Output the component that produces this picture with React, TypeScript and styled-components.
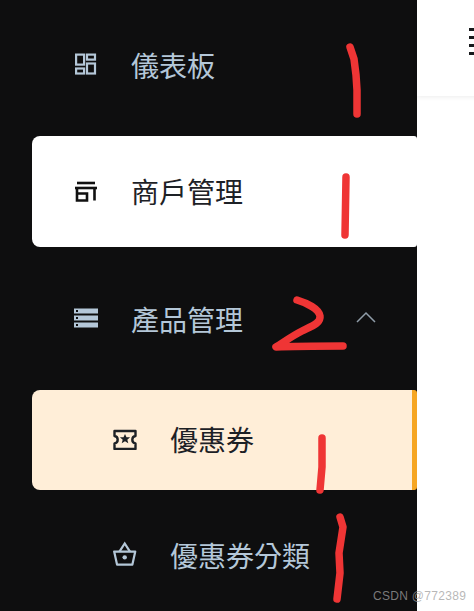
import React, { FC, ReactNode } from 'react';
import styled, { createGlobalStyle } from 'styled-components';

const GlobalStyle = createGlobalStyle`
  html, body {
    margin: 0;
    padding: 0;
    background: #fff;
  }
`;

const Page = styled.div`
  position: relative;
  display: flex;
  width: 474px;
  height: 611px;
  overflow: hidden;
  font-family: 'Noto Sans CJK TC', 'Noto Sans', sans-serif;
`;

const Sidebar = styled.nav`
  display: flex;
  flex-direction: column;
  flex: 0 0 417px;
  box-sizing: border-box;
  padding: 10px 0 0 32px;
  background: #0e0e0f;
`;

const Item = styled.div<{ $height: number; $gap: number; $sub?: boolean; $state?: 'white' | 'cream' }>`
  display: flex;
  align-items: center;
  flex: 0 0 ${(p) => p.$height}px;
  box-sizing: border-box;
  margin-bottom: ${(p) => p.$gap}px;
  padding-left: ${(p) => (p.$sub ? 81 : 42)}px;
  border-radius: 8px 3px 3px 8px;
  color: ${(p) => (p.$state ? '#1d2126' : '#b4c7d8')};
  background: ${(p) => (p.$state === 'white' ? '#fff' : p.$state === 'cream' ? '#ffeed8' : 'transparent')};
  border-right: ${(p) => (p.$state === 'cream' ? '5px solid #f6a623' : 'none')};
`;

const IconBox = styled.span`
  display: flex;
  flex: 0 0 24px;
  min-width: 0;
  margin: -4px 33px 0 0;
`;

const Label = styled.span`
  flex: 1;
  margin-top: -2px;
  font-size: 28px;
  line-height: 40px;
  white-space: nowrap;
`;

const Chevron = styled.svg`
  flex: none;
  margin: -6px 41px 0 0;
  color: #8f9ca8;
`;

const Main = styled.main`
  flex: 1;
  background: #fff;
`;

const Header = styled.header`
  display: flex;
  align-items: center;
  height: 96px;
  padding-left: 52px;
  box-sizing: border-box;
  background: #fff;
  box-shadow: 0 1px 5px rgba(0, 0, 0, 0.08);
`;

const MenuBars = styled.div`
  display: flex;
  flex-direction: column;
  flex: none;
  gap: 5px;
  width: 22px;
  margin-top: -14px;
`;

const Bar = styled.span`
  display: block;
  height: 3px;
  background: #17191c;
`;

const Scribbles = styled.svg`
  position: absolute;
  inset: 0;
  pointer-events: none;
`;

const Watermark = styled.span`
  position: absolute;
  left: 373px;
  top: 589px;
  font-family: 'Liberation Sans', Arial, sans-serif;
  font-size: 12px;
  line-height: 14px;
  letter-spacing: 0.3px;
  color: rgba(160, 160, 160, 0.75);
`;

const DashboardIcon = () => (
  <svg width="24" height="24" viewBox="0 0 24 24" fill="none" stroke="currentColor" strokeWidth="2.2">
    <rect x="2.100" y="2.600" width="8" height="10" />
    <rect x="13" y="2.600" width="8" height="5" />
    <rect x="13" y="11.500" width="8" height="10" />
    <rect x="2.100" y="16.500" width="8" height="5" />
  </svg>
);

const StoreIcon = () => (
  <svg width="24" height="24" viewBox="0 0 24 24" fill="none" stroke="#111" strokeWidth="2.6">
    <path d="M3 5h18" />
    <path d="M1 10h22" />
    <path d="M3 10v12.500h10v-7H3" />
    <path d="M20.500 10v12.500" />
  </svg>
);

const ServerIcon = () => (
  <svg width="24" height="24" viewBox="0 0 24 24">
    <g fill="currentColor">
      <rect x="0" y="2.500" width="24" height="5" />
      <rect x="0" y="9.500" width="24" height="5" />
      <rect x="0" y="16.500" width="24" height="5" />
    </g>
    <g fill="#0e0e0f">
      <rect x="2" y="4" width="2" height="2" />
      <rect x="2" y="11" width="2" height="2" />
      <rect x="2" y="18" width="2" height="2" />
    </g>
  </svg>
);

const TicketIcon = () => (
  <svg width="24" height="24" viewBox="0 0 24 24" fill="none" stroke="currentColor" strokeWidth="2.4">
    <path d="M1.500 5h21v5a3.800 3.800 0 0 0 0 7.500V23h-21v-5.500a3.800 3.800 0 0 0 0-7.500z" strokeLinejoin="round" />
    <path
      d="M12 8l1.500 3.300h3.600l-2.800 2.400 1 3.600-3.300-2-3.300 2 1-3.600-2.800-2.400h3.600z"
      fill="currentColor"
      stroke="none"
    />
  </svg>
);

const BasketIcon = () => (
  <svg width="25" height="26" viewBox="0 0 25 26" fill="none" stroke="currentColor" strokeWidth="2.3">
    <path d="M1.200 10.500h22l-3 13.500H4.200z" strokeLinejoin="round" />
    <path d="M6.700 10.500L12.200 2l5.500 8.500" />
    <circle cx="12.200" cy="16.500" r="2.300" fill="currentColor" stroke="none" />
  </svg>
);

type Row = {
  label: string;
  icon: ReactNode;
  height: number;
  gap: number;
  sub?: boolean;
  state?: 'white' | 'cream';
  open?: boolean;
};

const rows: Row[] = [
  { label: '儀表板', icon: <DashboardIcon />, height: 111, gap: 15 },
  { label: '商戶管理', icon: <StoreIcon />, height: 111, gap: 17, state: 'white' },
  { label: '產品管理', icon: <ServerIcon />, height: 111, gap: 15, open: true },
  { label: '優惠券', icon: <TicketIcon />, height: 100, gap: 16, sub: true, state: 'cream' },
  { label: '優惠券分類', icon: <BasketIcon />, height: 100, gap: 0, sub: true },
];

const App: FC = () => (
  <>
    <GlobalStyle />
    <Page>
      <Sidebar>
        {rows.map((row) => (
          <Item key={row.label} $height={row.height} $gap={row.gap} $sub={row.sub} $state={row.state}>
            <IconBox>{row.icon}</IconBox>
            <Label>{row.label}</Label>
            {row.open && (
              <Chevron width="20" height="12" viewBox="0 0 20 12" fill="none" stroke="currentColor" strokeWidth="1.5">
                <path d="M1 11l9-9 9 9" />
              </Chevron>
            )}
          </Item>
        ))}
      </Sidebar>
      <Main>
        <Header>
          <MenuBars>
            <Bar />
            <Bar />
            <Bar />
            <Bar />
          </MenuBars>
        </Header>
      </Main>
      <Scribbles width="474" height="611" fill="none" stroke="#ef3535" strokeWidth="7.500" strokeLinecap="round" strokeLinejoin="round">
        <path d="M350 47l4 12 2 16 1 15v24" />
        <path d="M346 177l-1 58" />
        <path d="M297 300c10 3 22 9 23 16s-8 10-18 15-18 11-26 16c20-1 45-1 67-1" />
        <path d="M322 438v29l-2 23" />
        <path d="M340 517l3 10-4 26 1 20-3 26" />
      </Scribbles>
      <Watermark>CSDN @772389</Watermark>
    </Page>
  </>
);

export default App;
